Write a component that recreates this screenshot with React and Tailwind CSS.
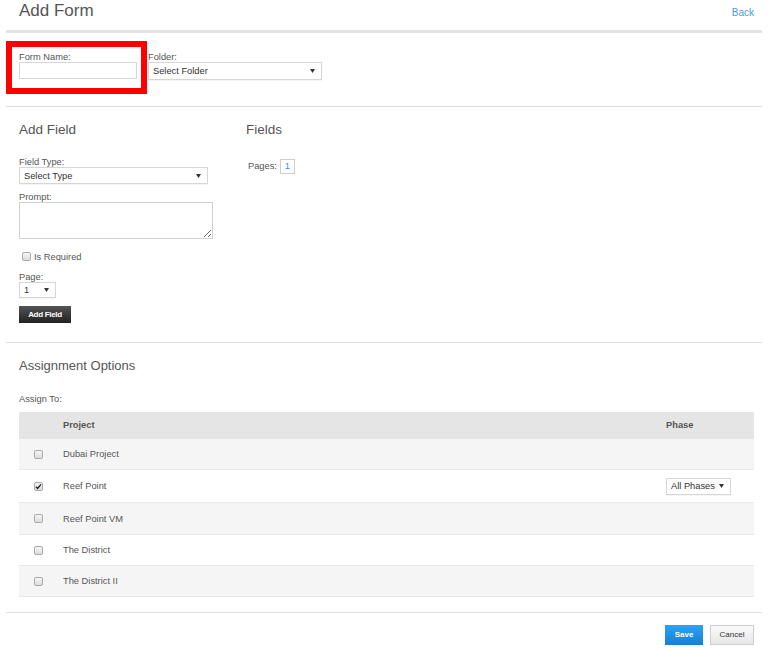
import { useState } from "react";

const projects = [
  { name: "Dubai Project", checked: false, h: "h-[31px]", bg: "bg-[#f5f5f5]" },
  { name: "Reef Point", checked: true, h: "h-[33px]", bg: "bg-white", phase: true },
  { name: "Reef Point VM", checked: false, h: "h-[32px]", bg: "bg-[#f5f5f5]" },
  { name: "The District", checked: false, h: "h-[31px]", bg: "bg-white" },
  { name: "The District II", checked: false, h: "h-[31px]", bg: "bg-[#f5f5f5]" },
];

const Arrow = () => (
  <svg width="5" height="4" viewBox="0 0 5 4" className="shrink-0">
    <path d="M0 0h5L2.5 4z" fill="#333" />
  </svg>
);

const SelectBox = ({ label, className }) => (
  <div
    className={`flex items-center justify-between border border-[#d6d6d6] bg-white pl-[4px] pr-[6px] text-[9.3px] text-[#333] shadow-[0_1px_1px_rgba(0,0,0,0.04)] ${className}`}
  >
    <span className="leading-[12px]">{label}</span>
    <Arrow />
  </div>
);

const Checkbox = ({ checked, onChange }) => (
  <button
    type="button"
    onClick={onChange}
    className="flex h-[9px] w-[9px] items-center justify-center rounded-[2px] border border-[#a9a9a9] bg-gradient-to-b from-[#f6f6f6] to-[#dcdcdc] p-0"
  >
    {checked && (
      <svg width="7" height="7" viewBox="0 0 7 7">
        <path d="M1 3.8l1.6 1.6L6 1.4" stroke="#222" strokeWidth="1.4" fill="none" />
      </svg>
    )}
  </button>
);

const Label = ({ children, className = "" }) => (
  <div className={`text-[9.3px] leading-[10px] text-[#555] ${className}`}>{children}</div>
);

export default function App() {
  const [rows, setRows] = useState(projects);
  const [required, setRequired] = useState(false);

  const toggleRow = (index) => {
    setRows(rows.map((row, i) => (i === index ? { ...row, checked: !row.checked } : row)));
  };

  return (
    <div className="min-h-screen bg-white font-['Liberation_Sans',Arial,sans-serif] text-[#555]">
      <div className="px-[6px]">
        {/* header */}
        <div className="flex h-[30px] items-start justify-between">
          <h1 className="pl-[13px] text-[17px] leading-[22px] text-[#555]">Add Form</h1>
          <a href="#" className="mr-[8px] mt-[7px] text-[10px] leading-[12px] text-[#4b9be2]">
            Back
          </a>
        </div>
        <div className="h-[3px] bg-[#e4e4e4]" />

        {/* form name + folder */}
        <div className="flex items-start pt-[8px] pb-[12px]">
          <div className="h-[53px] w-[141px] border-[6px] border-[#ff0000] pl-[7px] pt-[5px]">
            <Label>Form Name:</Label>
            <input
              type="text"
              className="block h-[17px] w-[118px] border border-[#d6d6d6] bg-white px-1 text-[9px] outline-none"
            />
          </div>
          <div className="ml-[1px] pt-[11px]">
            <Label>Folder:</Label>
            <SelectBox label="Select Folder" className="h-[18px] w-[174px]" />
          </div>
        </div>
        <div className="h-px bg-[#dedede]" />

        {/* add field / fields */}
        <div className="flex pt-[15px] pb-[19px]">
          <div className="w-[240px] pl-[13px]">
            <h2 className="text-[13.5px] leading-[16px] text-[#555]">Add Field</h2>
            <Label className="mt-[19px]">Field Type:</Label>
            <SelectBox label="Select Type" className="h-[17px] w-[189px]" />
            <Label className="mt-[8px]">Prompt:</Label>
            <textarea className="block h-[37px] w-[194px] border border-[#d0d0d0] bg-white text-[9px] outline-none" />
            <div className="mt-[12px] flex h-[11px] items-center gap-[3px] pl-[3px]">
              <Checkbox checked={required} onChange={() => setRequired(!required)} />
              <span className="pt-[2px] text-[9.3px] leading-[11px] text-[#555]">Is Required</span>
            </div>
            <Label className="mt-[10px]">Page:</Label>
            <SelectBox label="1" className="h-[16px] w-[37px]" />
            <button
              type="button"
              className="mt-[8px] flex h-[17px] w-[52px] items-center justify-center bg-gradient-to-b from-[#555] to-[#222] text-[8px] font-bold tracking-[-0.3px] text-white"
            >
              Add Field
            </button>
          </div>
          <div>
            <h2 className="text-[13.5px] leading-[16px] text-[#555]">Fields</h2>
            <div className="mt-[21px] flex items-center gap-[3px] pl-[2px]">
              <span className="text-[9.3px] leading-[11px] text-[#555]">Pages:</span>
              <span className="flex h-[15px] w-[15px] items-center justify-center border border-[#cfcfcf] text-[9.3px] text-[#3d8fdc]">
                1
              </span>
            </div>
          </div>
        </div>
        <div className="h-px bg-[#dedede]" />

        {/* assignment */}
        <div className="pl-[13px] pr-[8px] pt-[15px]">
          <h2 className="text-[13px] leading-[16px] text-[#555]">Assignment Options</h2>
          <Label className="mt-[20px]">Assign To:</Label>
          <div className="mt-[8px]">
            <div className="flex h-[27px] items-center bg-[#e5e5e5] pt-[1px] text-[9.3px] font-bold text-[#555]">
              <div className="w-[44px]" />
              <div className="flex-1">Project</div>
              <div className="w-[88px]">Phase</div>
            </div>
            {rows.map((row, index) => (
              <div
                key={row.name}
                className={`flex items-center border-b border-[#e8e8e8] text-[9.3px] text-[#555] ${row.h} ${row.bg}`}
              >
                <div className="w-[44px] pl-[15px]">
                  <Checkbox checked={row.checked} onChange={() => toggleRow(index)} />
                </div>
                <div className="flex-1 pt-[2px]">{row.name}</div>
                <div className="w-[88px]">
                  {row.phase && <SelectBox label="All Phases" className="h-[17px] w-[65px]" />}
                </div>
              </div>
            ))}
          </div>
        </div>
        <div className="mt-[15px] h-px bg-[#dedede]" />

        {/* footer */}
        <div className="flex justify-end gap-[7px] pr-[8px] pt-[12px]">
          <button
            type="button"
            className="h-[20px] w-[38px] bg-gradient-to-b from-[#2fa2f2] to-[#1380d6] text-[8px] font-bold text-white"
          >
            Save
          </button>
          <button
            type="button"
            className="h-[20px] w-[44px] border border-[#cfcfcf] bg-gradient-to-b from-[#fbfbfb] to-[#e6e6e6] text-[8px] text-[#333]"
          >
            Cancel
          </button>
        </div>
      </div>
    </div>
  );
}
